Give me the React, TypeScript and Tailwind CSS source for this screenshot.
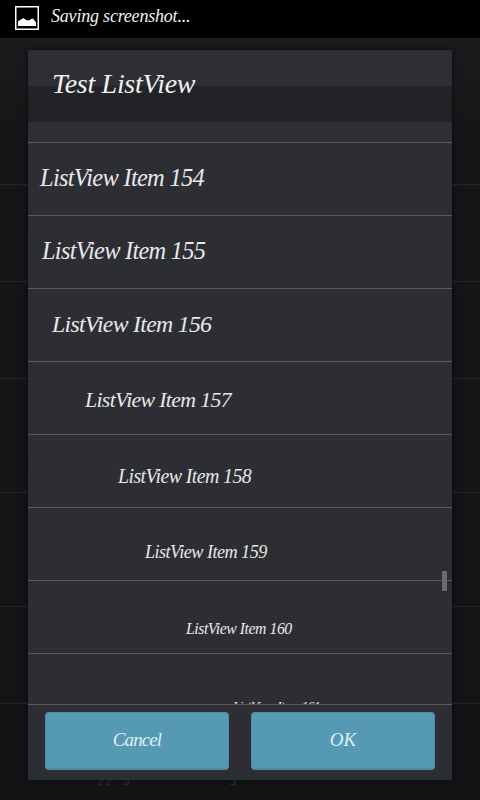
const items = [
  { label: "ListView Item 154", pl: "pl-[12px]", pt: "pb-[2px]", size: "text-[24.5px]" },
  { label: "ListView Item 155", pl: "pl-[14px]", pt: "pb-[2px]", size: "text-[24.4px]" },
  { label: "ListView Item 156", pl: "pl-[24px]", pt: "pt-0", size: "text-[23.8px]" },
  { label: "ListView Item 157", pl: "pl-[57px]", pt: "pt-[4px]", size: "text-[21.8px]" },
  { label: "ListView Item 158", pl: "pl-[90px]", pt: "pt-[12px]", size: "text-[19.9px]" },
  { label: "ListView Item 159", pl: "pl-[117px]", pt: "pt-[18px]", size: "text-[18.2px]" },
  { label: "ListView Item 160", pl: "pl-[158px]", pt: "pt-[24px]", size: "text-[15.8px]" },
];

const bgRows = ["h-[109px]", "h-[97px]", "h-[97px]", "h-[114px]", "h-[114px]", "h-[97px]"];

function PictureIcon() {
  return (
    <svg width="24" height="24" viewBox="0 0 24 24" className="shrink-0">
      <rect x="0.75" y="0.75" width="22.5" height="22.5" fill="#000" stroke="#fff" strokeWidth="1.5" />
      <path d="M3 20V15.5L6 13.5L8.5 12L11 14L14 14.5L16 13L18 12.5L21 16.5V20Z" fill="#fff" />
    </svg>
  );
}

export default function App() {
  return (
    <div className="relative w-[480px] h-[800px] overflow-hidden bg-[#131416] font-['Liberation_Serif',serif] italic">
      <div className="h-[38px] bg-black flex items-center pl-[15px] pb-[2px] gap-[12px]">
        <PictureIcon />
        <span className="text-[#f0f0f0] text-[18px] tracking-[-0.2px] -translate-y-[2px]">Saving screenshot...</span>
      </div>

      <div className="bg-[linear-gradient(#1a1b1d_0,#141517_110px,#131416_100%)]">
        <div className="h-[38px]" />
        {bgRows.map((h, i) => (
          <div key={i} className={`${h} border-b border-[#24262a]`} />
        ))}
        <div className="flex pl-[99px] pt-[62px] text-[16px] leading-[20px] text-[#2e3034]">
          <span>pp</span>
          <span className="ml-[8px]">g</span>
          <span className="ml-[99px]">g</span>
        </div>
      </div>

      <div className="absolute left-[28px] top-[50px] w-[424px] h-[730px] flex flex-col bg-[#2d2e33] shadow-[0_0_6px_rgba(0,0,0,0.6)]">
        <div className="h-[93px] shrink-0 flex flex-col border-b border-[#5a5b5f]">
          <div className="h-[36px] bg-[#2e2f34]" />
          <div className="h-[36px] bg-[#222327] flex items-center pl-[24px]">
            <span className="text-[#f2f2f2] text-[28px] tracking-[-0.3px] leading-none -translate-y-[20px]">
              Test ListView
            </span>
          </div>
          <div className="flex-1 bg-[#2e2f34]" />
        </div>

        <div className="relative flex-1 min-h-0 overflow-hidden">
          {items.map((item) => (
            <div
              key={item.label}
              className={`h-[73px] flex items-center border-b border-[#5a5b5f] whitespace-nowrap tracking-[-0.03em] text-[#e8e8e8] ${item.pl} ${item.pt} ${item.size}`}
            >
              {item.label}
            </div>
          ))}
          <div className="h-[73px] pt-[42px] pl-[205px] text-[#e8e8e8] text-[13px] tracking-[-0.03em] whitespace-nowrap">
            ListView Item 161
          </div>
          <div className="absolute right-[5px] top-[428px] w-[5px] h-[20px] bg-[#6a6b6f]" />
        </div>

        <div className="h-[76px] shrink-0 border-t border-[#5a5b5f] flex items-start justify-between px-[17px] pt-[7px]">
          <button className="w-[184px] h-[58px] rounded-[4px] bg-[#5699b2] border border-b-2 border-[#4f8ca3] text-[#dff0f5] text-[19px] tracking-[-0.9px]">
            Cancel
          </button>
          <button className="w-[184px] h-[58px] rounded-[4px] bg-[#5699b2] border border-b-2 border-[#4f8ca3] text-[#dff0f5] text-[19px]">
            OK
          </button>
        </div>
      </div>
    </div>
  );
}
